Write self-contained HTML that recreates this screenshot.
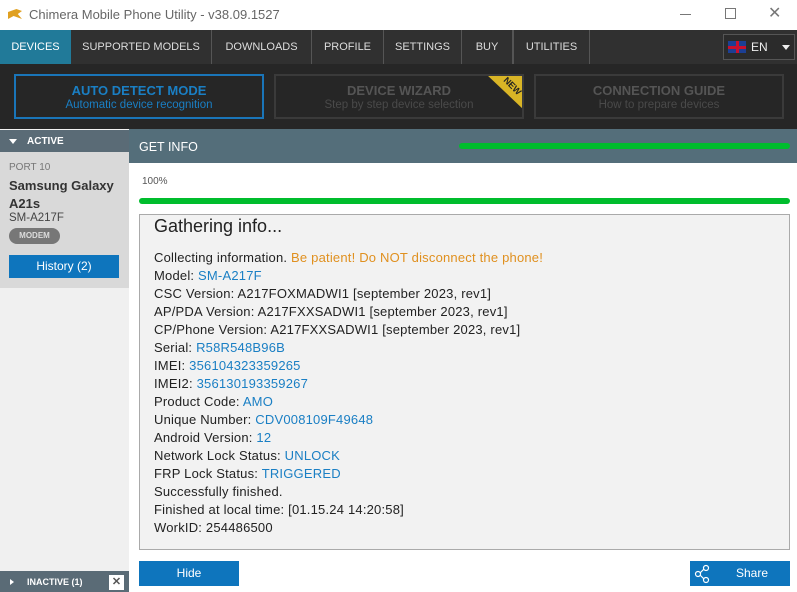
<!DOCTYPE html>
<html><head><meta charset="utf-8"><style>
*{margin:0;padding:0;box-sizing:border-box}
body{width:797px;height:592px;overflow:hidden;background:#fff;font-family:"Liberation Sans",sans-serif;position:relative}
.a{position:absolute}
.tab{position:absolute;top:30px;height:34px;line-height:35px;color:#ddd;font-size:11px;text-align:center;border-right:1px solid #555}
.big{position:absolute;top:74px;height:45px;border:2px solid #3a3a3a;text-align:center}
.big b{display:block;font-size:13px;margin-top:7px;color:#555}
.big span{display:block;font-size:11.5px;color:#4a4a4a;margin-top:1px}
.ln{position:absolute;left:154px;font-size:13px;letter-spacing:0.2px;color:#222;white-space:nowrap}
.ln i{font-style:normal;color:#1a7fc4}
</style></head><body>
<div class="a" style="left:8px;top:9px;width:14px;height:10px;background:#e0a020;clip-path:polygon(0 30%,60% 0,100% 20%,70% 50%,100% 100%,40% 70%,0 100%)"></div>
<div class="a" style="left:29px;top:7px;font-size:13px;color:#666">Chimera Mobile Phone Utility - v38.09.1527</div>
<div class="a" style="left:680px;top:14px;width:11px;height:1px;background:#777"></div>
<div class="a" style="left:725px;top:8px;width:11px;height:11px;border:1px solid #777"></div>
<div class="a" style="left:768px;top:3px;font-size:16px;color:#777">✕</div>
<div class="a" style="left:0;top:30px;width:797px;height:34px;background:#303030"></div>
<div class="tab" style="left:0;width:71px;background:#217a99;color:#fff;border:none">DEVICES</div>
<div class="tab" style="left:71px;width:141px">SUPPORTED MODELS</div>
<div class="tab" style="left:212px;width:100px">DOWNLOADS</div>
<div class="tab" style="left:312px;width:72px">PROFILE</div>
<div class="tab" style="left:384px;width:78px">SETTINGS</div>
<div class="tab" style="left:462px;width:52px;border-right:2px solid #555">BUY</div>
<div class="tab" style="left:514px;width:76px">UTILITIES</div>
<div class="a" style="left:723px;top:34px;width:72px;height:26px;border:1px solid #555;background:#2b2b2b"></div>
<div class="a" style="left:728px;top:41px;width:18px;height:12px;background:#1c3f94"></div>
<div class="a" style="left:728px;top:46px;width:18px;height:3px;background:#c8102e"></div>
<div class="a" style="left:736px;top:41px;width:3px;height:12px;background:#c8102e"></div>
<div class="a" style="left:751px;top:40px;font-size:12px;color:#eee">EN</div>
<div class="a" style="left:782px;top:45px;border:4px solid transparent;border-top:5px solid #eee"></div>
<div class="a" style="left:0;top:64px;width:797px;height:65px;background:#262626"></div>
<div class="big" style="left:14px;width:250px;border-color:#1a75b8"><b style="color:#1a7fc4">AUTO DETECT MODE</b><span style="color:#1a7fc4">Automatic device recognition</span></div>
<div class="big" style="left:274px;width:250px;overflow:hidden"><b>DEVICE WIZARD</b><span>Step by step device selection</span>
<div class="a" style="right:-2px;top:-2px;width:38px;height:36px;background:#d9b526;clip-path:polygon(0 0,100% 0,100% 100%)"></div>
<div class="a" style="right:-1px;top:5px;font-size:9px;font-weight:bold;color:#222;transform:rotate(45deg)">NEW</div></div>
<div class="big" style="left:534px;width:250px"><b>CONNECTION GUIDE</b><span>How to prepare devices</span></div>
<div class="a" style="left:0;top:129px;width:129px;height:463px;background:#f0f0f0"></div>
<div class="a" style="left:0;top:130px;width:129px;height:22px;background:#5a6b76"></div>
<div class="a" style="left:9px;top:139px;border:4px solid transparent;border-top:5px solid #fff"></div>
<div class="a" style="left:27px;top:136px;font-size:10px;font-weight:bold;color:#fff">ACTIVE</div>
<div class="a" style="left:0;top:152px;width:129px;height:136px;background:#d9d9d9"></div>
<div class="a" style="left:9px;top:162px;font-size:10px;color:#777">PORT 10</div>
<div class="a" style="left:9px;top:177px;font-size:13px;font-weight:bold;color:#333;line-height:18px">Samsung Galaxy<br>A21s</div>
<div class="a" style="left:9px;top:212px;font-size:11.5px;color:#444">SM-A217F</div>
<div class="a" style="left:9px;top:228px;width:51px;height:16px;border-radius:8px;background:#777;color:#ddd;font-size:8px;font-weight:bold;text-align:center;line-height:16px">MODEM</div>
<div class="a" style="left:9px;top:255px;width:110px;height:23px;background:#0e75bd;color:#fff;font-size:12px;text-align:center;line-height:23px">History (2)</div>
<div class="a" style="left:0;top:571px;width:129px;height:21px;background:#5a6b76"></div>
<div class="a" style="left:10px;top:579px;border:3px solid transparent;border-left:4px solid #fff"></div>
<div class="a" style="left:27px;top:577px;font-size:9px;font-weight:bold;color:#fff">INACTIVE (1)</div>
<div class="a" style="left:109px;top:575px;width:15px;height:15px;background:#fff;color:#555;font-size:11px;text-align:center;line-height:15px;font-weight:bold">✕</div>
<div class="a" style="left:129px;top:129px;width:668px;height:34px;background:#546e7a"></div>
<div class="a" style="left:139px;top:140px;font-size:12.5px;color:#fff">GET INFO</div>
<div class="a" style="left:459px;top:143px;width:331px;height:6px;border-radius:3px;background:#00bd2d"></div>
<div class="a" style="left:142px;top:176px;font-size:10px;color:#555">100%</div>
<div class="a" style="left:139px;top:198px;width:651px;height:6px;border-radius:3px;background:#00bd2d"></div>
<div class="a" style="left:139px;top:214px;width:651px;height:336px;background:#f2f2f2;border:1px solid #aaa"></div>
<div class="a" style="left:154px;top:216px;font-size:18px;color:#222">Gathering info...</div>
<div class="ln" style="top:250px">Collecting information. <span style="color:#e0901f">Be patient! Do NOT disconnect the phone!</span></div>
<div class="ln" style="top:268px">Model: <i>SM-A217F</i></div>
<div class="ln" style="top:286px">CSC Version: A217FOXMADWI1 [september 2023, rev1]</div>
<div class="ln" style="top:304px">AP/PDA Version: A217FXXSADWI1 [september 2023, rev1]</div>
<div class="ln" style="top:322px">CP/Phone Version: A217FXXSADWI1 [september 2023, rev1]</div>
<div class="ln" style="top:340px">Serial: <i>R58R548B96B</i></div>
<div class="ln" style="top:358px">IMEI: <i>356104323359265</i></div>
<div class="ln" style="top:376px">IMEI2: <i>356130193359267</i></div>
<div class="ln" style="top:394px">Product Code: <i>AMO</i></div>
<div class="ln" style="top:412px">Unique Number: <i>CDV008109F49648</i></div>
<div class="ln" style="top:430px">Android Version: <i>12</i></div>
<div class="ln" style="top:448px">Network Lock Status: <i>UNLOCK</i></div>
<div class="ln" style="top:466px">FRP Lock Status: <i>TRIGGERED</i></div>
<div class="ln" style="top:484px">Successfully finished.</div>
<div class="ln" style="top:502px">Finished at local time: [01.15.24 14:20:58]</div>
<div class="ln" style="top:520px">WorkID: 254486500</div>
<div class="a" style="left:139px;top:561px;width:100px;height:25px;background:#0e75bd;color:#fff;font-size:12px;text-align:center;line-height:25px">Hide</div>
<div class="a" style="left:690px;top:561px;width:100px;height:25px;background:#0e75bd;color:#fff;font-size:12px;line-height:25px;padding-left:46px">Share</div>
<svg class="a" style="left:694px;top:564px" width="18" height="20" viewBox="0 0 18 20" fill="none" stroke="#fff" stroke-width="1.2"><circle cx="4" cy="10" r="2.5"/><circle cx="12" cy="4" r="2.5"/><circle cx="12" cy="16" r="2.5"/><path d="M6 9 L10 5 M6 11 L10 15"/></svg>
</body></html>
